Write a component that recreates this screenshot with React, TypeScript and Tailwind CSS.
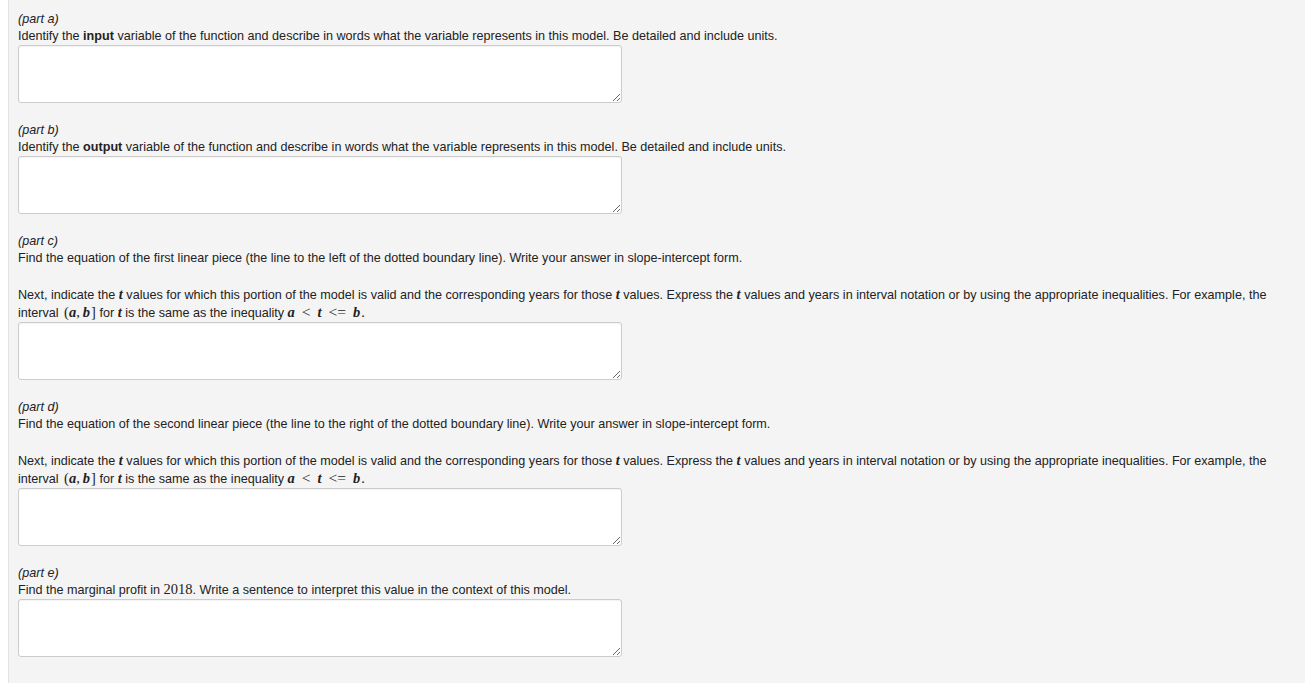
import React from 'react';

const M = ({ children }: { children: React.ReactNode }) => (
  <span className="font-['Liberation_Serif','DejaVu_Serif',serif] italic text-[14.5px] leading-none font-semibold">{children}</span>
);
const N = ({ children, className = '' }: { children: React.ReactNode; className?: string }) => (
  <span className={`font-['Liberation_Serif','DejaVu_Serif',serif] text-[14.5px] leading-none ${className}`}>{children}</span>
);

function Answer() {
  return (
    <textarea className="block w-[604px] h-[58px] bg-white border border-[#cccccc] rounded-[3px] shadow-[inset_0_1px_1px_rgba(0,0,0,0.05)] outline-none" />
  );
}

function Part({ label, children }: { label: string; children: React.ReactNode }) {
  return (
    <div className="mb-[19px]">
      <div className="italic">(part {label})</div>
      {children}
      <Answer />
    </div>
  );
}

function Interval() {
  return (
    <p className="mt-[20px]">
      Next, indicate the <M>t</M> values for which this portion of the model is valid and the corresponding years for those <M>t</M> values. Express the <M>t</M> values and years in interval notation or by using the appropriate inequalities. For example, the interval <N className="ml-[2px]">(</N><M>a</M><N className="mr-[3px]">,</N><M>b</M><N className="ml-[1px]">]</N> for <M>t</M> is the same as the inequality <M>a</M><N className="mx-[7px] text-[15.5px]">&lt;</N><M>t</M><N className="mx-[7px] text-[15.5px]">&lt;=</N><M>b</M><N className="ml-[1px]">.</N>
    </p>
  );
}

export default function App() {
  return (
    <div className="min-h-screen bg-white flex font-['Liberation_Sans',Arial,sans-serif] text-[12.6px] leading-[17px] text-[#222]">
      <div className="w-[8px] shrink-0" />
      <div className="flex-1 bg-[#f4f4f4] border-l border-[#e3e3e3] pl-[9px] pr-[20px] pt-[11px] pb-[30px]">
        <Part label="a">
          <p>Identify the <b>input</b> variable of the function and describe in words what the variable represents in this model. Be detailed and include units.</p>
        </Part>
        <Part label="b">
          <p>Identify the <b>output</b> variable of the function and describe in words what the variable represents in this model. Be detailed and include units.</p>
        </Part>
        <Part label="c">
          <p>Find the equation of the first linear piece (the line to the left of the dotted boundary line). Write your answer in slope-intercept form.</p>
          <Interval />
        </Part>
        <Part label="d">
          <p>Find the equation of the second linear piece (the line to the right of the dotted boundary line). Write your answer in slope-intercept form.</p>
          <Interval />
        </Part>
        <Part label="e">
          <p>Find the marginal profit in <N>2018</N>. Write a sentence to interpret this value in the context of this model.</p>
        </Part>
      </div>
    </div>
  );
}
